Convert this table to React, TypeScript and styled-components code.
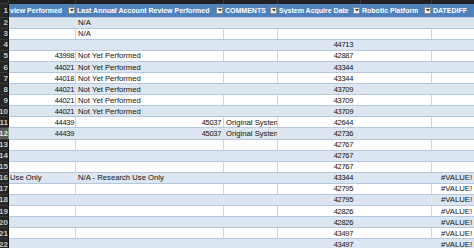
import React from 'react'
import styled, { createGlobalStyle } from 'styled-components'

const GlobalStyle = createGlobalStyle`
  html, body {
    margin: 0;
    padding: 0;
    background: #ffffff;
    overflow: hidden;
  }
  body {
    width: 474px;
    height: 248px;
    font-family: "Liberation Sans", Arial, sans-serif;
  }
`

type Align = 'left' | 'right' | 'center'

type Column = {
  title: string
  width: number
  align: Align
  pad: number
  line: boolean
}

const columns: Column[] = [
  { title: 'view Performed', width: 67, align: 'right', pad: 1, line: true },
  { title: 'Last Annual Account Review Performed', width: 148, align: 'left', pad: 2, line: true },
  { title: 'COMMENTS', width: 54, align: 'left', pad: 2, line: true },
  { title: 'System Acquire Date', width: 83, align: 'right', pad: 7, line: false },
  { title: 'Robotic Platform', width: 71, align: 'left', pad: 2, line: true },
  { title: 'DATEDIFF', width: 50, align: 'center', pad: 0, line: false },
]

const template = `9px ${columns.map((c) => `${c.width}px`).join(' ')}`

type CellValue = string | { text: string; align: Align; pad?: number }

// values per data row, starting at sheet row 2
const rows: CellValue[][] = [
  ['', 'N/A', '', '', '', ''],
  ['', 'N/A', '', '', '', ''],
  ['', '', '', '44713', '', ''],
  ['43998', 'Not Yet Performed', '', '42887', '', ''],
  ['44021', 'Not Yet Performed', '', '43344', '', ''],
  ['44018', 'Not Yet Performed', '', '43344', '', ''],
  ['44021', 'Not Yet Performed', '', '43709', '', ''],
  ['44021', 'Not Yet Performed', '', '43709', '', ''],
  ['44021', 'Not Yet Performed', '', '43709', '', ''],
  ['44439', { text: '45037', align: 'right', pad: 2 }, 'Original System', '42644', '', ''],
  ['44439', { text: '45037', align: 'right', pad: 2 }, 'Original System', '42736', '', ''],
  ['', '', '', '42767', '', ''],
  ['', '', '', '42767', '', ''],
  ['', '', '', '42767', '', ''],
  [{ text: 'Use Only', align: 'left', pad: 1 }, 'N/A - Research Use Only', '', '43344', '', '#VALUE!'],
  ['', '', '', '42795', '', '#VALUE!'],
  ['', '', '', '42795', '', '#VALUE!'],
  ['', '', '', '42826', '', '#VALUE!'],
  ['', '', '', '42826', '', '#VALUE!'],
  ['', '', '', '43497', '', '#VALUE!'],
  ['', '', '', '43497', '', '#VALUE!'],
]

const SELECTED_ROW = 12

const Sheet = styled.div`
  width: 482px;
  display: flex;
  flex-direction: column;
  color: #111111;
  font-size: 7.7px;
`

const LetterBar = styled.div`
  display: grid;
  grid-template-columns: ${template};
  height: 4px;
  background: #202020;
`

const LetterCell = styled.div`
  border-right: 1px solid #3c3c3c;
  box-sizing: border-box;
`

const HeaderRow = styled.div`
  display: grid;
  grid-template-columns: ${template};
  height: 12.7px;
  background: #4f81bd;
`

const HeaderCell = styled.div`
  display: flex;
  align-items: center;
  justify-content: space-between;
  gap: 1px;
  padding: 0 1px 0 1px;
  overflow: hidden;
  color: #ffffff;
  font-weight: bold;
  font-size: 7px;
  white-space: nowrap;
  box-sizing: border-box;
`

const HeaderTitle = styled.span`
  overflow: hidden;
`

const FilterButton = styled.span`
  flex: none;
  display: flex;
  align-items: center;
  justify-content: center;
  width: 7px;
  height: 7px;
  background: #f2f2f2;
  border: 1px solid #8c8c8c;
  box-sizing: border-box;
`

const Row = styled.div<{ $band: boolean }>`
  display: grid;
  grid-template-columns: ${template};
  height: 11.08px;
  background: ${(p) => (p.$band ? '#dce6f1' : '#ffffff')};
  border-top: 1px solid #b4c8e2;
  box-sizing: border-box;
`

const RowNum = styled.div<{ $selected: boolean }>`
  display: flex;
  align-items: center;
  justify-content: flex-end;
  overflow: hidden;
  font-size: 8px;
  font-weight: bold;
  color: ${(p) => (p.$selected ? '#e8e8e8' : '#c8c8c8')};
  background: ${(p) => (p.$selected ? '#5b5b5b' : '#262626')};
  border-right: 1px solid ${(p) => (p.$selected ? '#6f9f6f' : '#101010')};
  box-sizing: border-box;
  margin-top: -1px;
  border-top: 1px solid #3a3a3a;
`

const Cell = styled.div<{ $align: Align; $pad: number; $line: boolean; $num: boolean }>`
  display: flex;
  align-items: center;
  justify-content: ${(p) =>
    p.$align === 'right' ? 'flex-end' : p.$align === 'center' ? 'center' : 'flex-start'};
  padding: 0 ${(p) => (p.$align === 'right' ? p.$pad : 0)}px 0
    ${(p) => (p.$align === 'left' ? p.$pad : 0)}px;
  border-right: 1px solid ${(p) => (p.$line ? '#d4d4d4' : 'transparent')};
  font-size: ${(p) => (p.$num ? '7.5px' : '7.7px')};
  letter-spacing: ${(p) => (p.$num ? '-0.3px' : '0')};
  white-space: nowrap;
  overflow: hidden;
  box-sizing: border-box;
`

function Arrow() {
  return (
    <svg width="4" height="3" viewBox="0 0 4 3">
      <path d="M0 0 L4 0 L2 2.5 Z" fill="#3c3c3c" />
    </svg>
  )
}

const isNumber = (s: string) => /^\d+$/.test(s)

export default function App() {
  return (
    <>
      <GlobalStyle />
      <Sheet>
        <LetterBar>
          <LetterCell />
          {columns.map((c) => (
            <LetterCell key={c.title} />
          ))}
        </LetterBar>
        <HeaderRow>
          <RowNum $selected={false}>1</RowNum>
          {columns.map((c) => (
            <HeaderCell key={c.title}>
              <HeaderTitle>{c.title}</HeaderTitle>
              <FilterButton>
                <Arrow />
              </FilterButton>
            </HeaderCell>
          ))}
        </HeaderRow>
        {rows.map((values, i) => {
          const rowNumber = i + 2
          const band = rowNumber % 2 === 0
          return (
            <Row key={rowNumber} $band={band}>
              <RowNum $selected={rowNumber === SELECTED_ROW}>{rowNumber}</RowNum>
              {columns.map((c, ci) => {
                const v = values[ci]
                const text = typeof v === 'string' ? v : v.text
                let align: Align
                let pad: number
                if (typeof v === 'string') {
                  align = isNumber(v) ? 'right' : c.align === 'center' ? 'center' : 'left'
                  pad = align === 'right' ? c.pad : 2
                } else {
                  align = v.align
                  pad = v.pad ?? 2
                }
                return (
                  <Cell
                    key={c.title}
                    $align={align}
                    $pad={pad}
                    $line={c.line && !band}
                    $num={isNumber(text)}
                  >
                    {text}
                  </Cell>
                )
              })}
            </Row>
          )
        })}
      </Sheet>
    </>
  )
}
